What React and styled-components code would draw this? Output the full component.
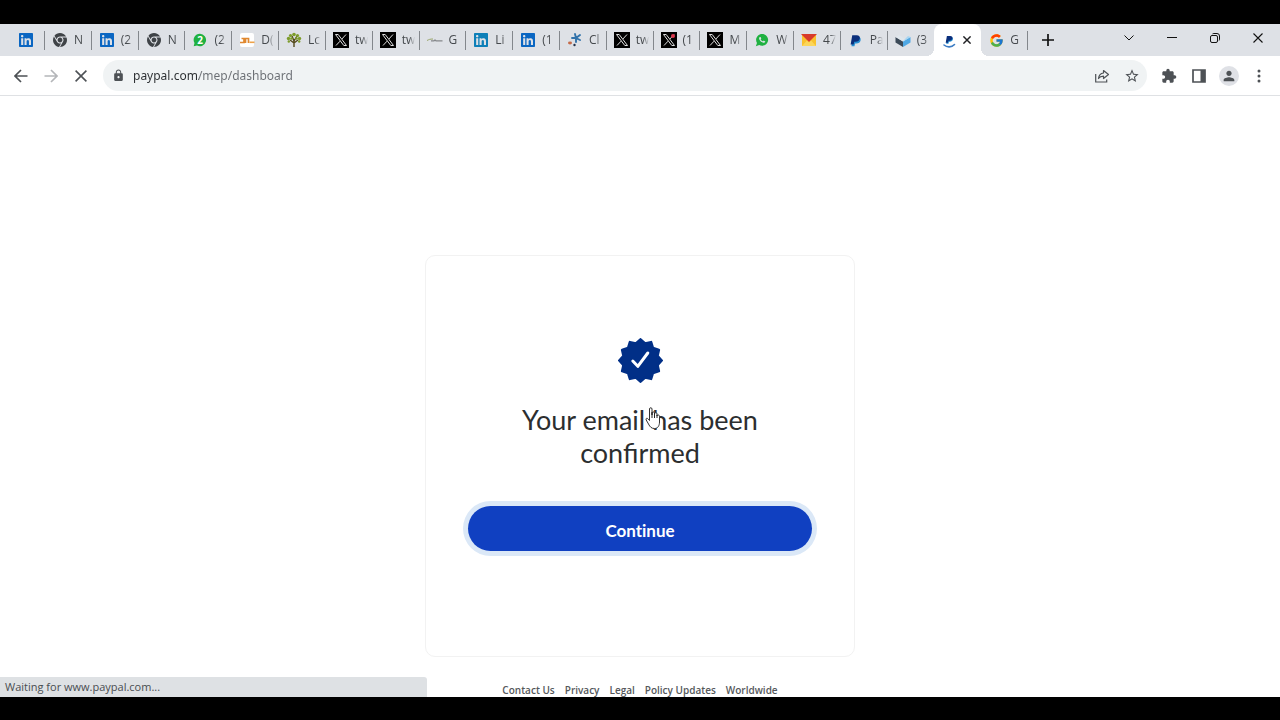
import React, { useState } from 'react'
import styled, { createGlobalStyle, css } from 'styled-components'
import { FaChrome, FaLinkedin } from 'react-icons/fa6'
import { FcGoogle } from 'react-icons/fc'
import { IoLogoWhatsapp } from 'react-icons/io'
import { MdExtension, MdLock, MdPerson, MdStarBorder } from 'react-icons/md'

const UI_FONT = '"Open Sans", "Noto Sans", sans-serif'

const GlobalStyle = createGlobalStyle`
  * {
    box-sizing: border-box;
  }

  body {
    margin: 0;
    background: #000;
    font-family: ${UI_FONT};
  }

  button {
    padding: 0;
    border: 0;
    background: none;
    font-family: inherit;
    color: inherit;
  }
`

const Screen = styled.div`
  display: flex;
  flex-direction: column;
  min-height: 100vh;
  padding: 24px 0 23px;
  background: #000;
`

/* tab strip */

const TabStrip = styled.div`
  display: flex;
  height: 32px;
  background: #dee1e6;
`

const Tabs = styled.div`
  display: flex;
  flex: 1;
  min-width: 0;
`

const Tab = styled.div`
  position: relative;
  display: flex;
  align-items: center;
  flex: 1;
  min-width: 0;

  &::after {
    content: '';
    position: absolute;
    top: 7px;
    right: 0;
    width: ${p => (p.$plain ? 0 : '1px')};
    height: 19px;
    background: #83878c;
  }

  ${p => p.$pinned && css`
    flex: 0 0 45px;
    padding-left: 11px;
  `}

  ${p => p.$active && css`
    border-radius: 8px 8px 0 0;
    background: #fff;

    &::before,
    &::after {
      content: '';
      position: absolute;
      top: auto;
      bottom: 0;
      width: 8px;
      height: 8px;
    }

    &::before {
      left: -8px;
      background: radial-gradient(circle at 0 0, transparent 8px, #fff 8px);
    }

    &::after {
      right: -8px;
      background: radial-gradient(circle at 100% 0, transparent 8px, #fff 8px);
    }
  `}
`

const TabButton = styled.button`
  display: flex;
  align-items: center;
  gap: 6px;
  min-width: 0;
  height: 16px;
  padding-left: 7px;
  font-size: 12px;
  line-height: 16px;
  color: #45494d;
`

const Favicon = styled.span`
  display: flex;
  align-items: center;
  justify-content: center;
  flex: none;
  width: 16px;
  height: 16px;
`

const TabLabel = styled.span`
  white-space: nowrap;
  mask-image: linear-gradient(to right, #000 7px, transparent 13px);
`

const TabClose = styled.button`
  display: flex;
  align-items: center;
  justify-content: center;
  width: 16px;
  height: 16px;
  margin-left: 2px;
  color: #202124;
`

const StripControls = styled.div`
  display: flex;
  justify-content: space-between;
  width: 252px;
  padding-right: 1px;
  color: #111;
`

const WindowButtons = styled.div`
  display: flex;
  height: 27px;
`

const WindowButton = styled.button`
  display: flex;
  align-items: center;
  justify-content: center;
  width: 43px;
`

const NewTab = styled.button`
  display: flex;
  align-items: center;
  justify-content: center;
  width: 40px;
`

/* toolbar */

const Toolbar = styled.div`
  display: flex;
  align-items: center;
  height: 40px;
  padding: 0 6px;
  border-bottom: 1px solid #dfe1e4;
  background: #fff;
`

const ToolButton = styled.button`
  display: flex;
  align-items: center;
  justify-content: center;
  flex: none;
  width: 30px;
  height: 30px;
  color: ${p => (p.disabled ? '#b4b6b9' : '#4d5155')};
`

const AddressBar = styled.div`
  display: flex;
  align-items: center;
  flex: 1;
  min-width: 0;
  height: 31px;
  margin: 0 7px;
  padding-left: 9px;
  border-radius: 16px;
  background: #f0f3f4;
`

const LockIcon = styled(MdLock)`
  flex: none;
  margin-right: 8px;
  color: #4d5155;
`

/* the host part of the address is darker than its path */
const AddressInput = styled.input`
  flex: 1;
  min-width: 0;
  padding: 0;
  border: 0;
  outline: 0;
  background: linear-gradient(to right, #2b2e31 66px, #6a6e73 66px);
  background-clip: text;
  color: transparent;
  caret-color: #202124;
  font-family: "Noto Sans", sans-serif;
  font-size: 12px;
  line-height: 20px;
`

const Avatar = styled.span`
  display: flex;
  align-items: center;
  justify-content: center;
  width: 20px;
  height: 20px;
  border-radius: 50%;
  background: #dfe1e6;
`

/* page */

const Page = styled.main`
  position: relative;
  display: flex;
  flex-direction: column;
  align-items: center;
  flex: 1;
  padding: 159px 16px 0;
  overflow: hidden;
  background: #fff;
`

const Card = styled.section`
  display: flex;
  flex-direction: column;
  align-items: center;
  width: 100%;
  max-width: 430px;
  padding: 82px 42px 105px;
  border: 1px solid #f2f2f2;
  border-radius: 10px;
`

const Title = styled.h1`
  position: relative;
  max-width: 270px;
  margin: 20px 0 37px;
  font-family: Lato, sans-serif;
  font-size: 27px;
  font-weight: 400;
  line-height: 33px;
  text-align: center;
  color: #2c2e2f;
`

const Continue = styled.button`
  width: 100%;
  height: 45px;
  padding-top: 4px;
  border-radius: 23px;
  background: #1040c1;
  box-shadow: 0 0 0 5px #dbe8f7;
  font-family: Lato, sans-serif;
  font-size: 17px;
  font-weight: 700;
  font-variant-ligatures: none;
  color: #fff;
`

const Footer = styled.footer`
  display: flex;
  gap: 10px;
  margin-top: 26px;
`

const FooterLink = styled.a`
  font-size: 10px;
  font-weight: 600;
  line-height: 14px;
  white-space: nowrap;
  text-decoration: none;
  color: #55585b;
`

const Status = styled.div`
  position: absolute;
  bottom: 0;
  left: 0;
  width: calc(100% / 3);
  height: 20px;
  padding-left: 5px;
  border-radius: 0 3px 0 0;
  background: #dee1e4;
  font-size: 11px;
  line-height: 20px;
  color: #494d51;
`

const Pointer = styled.svg`
  position: absolute;
  top: 4px;
  left: 52%;
`

/* icons */

const LinkedIn = ({ color = '#0a66c2' }) => <FaLinkedin size={16} color={color} />

const Chrome = () => <FaChrome size={14} color="#3f4347" />

const X = ({ alert }) => (
  <svg width="16" height="16" viewBox="0 0 16 16" fill="none" stroke="#ddd">
    <path d="M0 0h16v16H0z" fill="#000" stroke="none" />
    <path d="M2.500 2.500h2.700l8.300 11h-2.700z" />
    <path d="M13 2.500L8.900 7M7 9.200l-4 4.300" />
    {alert && <circle cx="12" cy="4" r="2" fill="#e0384e" stroke="none" />}
  </svg>
)

const CountText = styled.text`
  font-family: ${UI_FONT};
  font-size: 10px;
  font-weight: 700;
  text-anchor: middle;
`

const WhatsAppCount = () => (
  <svg width="16" height="16" viewBox="0 0 16 16">
    <path d="M8 1.800a6.200 6.200 0 1 1-3 11.700L1.700 14.300l.8-3.200A6.200 6.200 0 0 1 8 1.800z" fill="#1fb141" />
    <CountText x="8" y="12" fill="#fff">2</CountText>
  </svg>
)

const Delivery = () => (
  <svg width="16" height="16" viewBox="0 0 16 16">
    <rect x="1" y="1" width="14" height="14" rx="2" fill="#fff" />
    <path d="M1 10.500h4V6.500H2.500M6.500 11V6.500h3V11" stroke="#e0882f" strokeWidth="1.700" fill="none" />
    <path d="M10.500 10.300h5" stroke="#eda24a" strokeWidth="1.600" fill="none" />
  </svg>
)

const Tree = () => (
  <svg width="16" height="16" viewBox="0 0 16 16">
    <path d="M8 15V7M8 11L4 8M8 11l4-3M8 9L6 4M8 9l3-5" stroke="#554a1c" strokeWidth="1.400" fill="none" />
    <g fill="#7d9c2b">
      <circle cx="8" cy="2.500" r="1.800" />
      <circle cx="4.500" cy="3.500" r="1.600" />
      <circle cx="11.500" cy="3.500" r="1.600" />
      <circle cx="2.500" cy="6.500" r="1.700" />
      <circle cx="13.500" cy="6.500" r="1.700" />
      <circle cx="5.500" cy="6.500" r="1.300" />
      <circle cx="10.500" cy="6.500" r="1.300" />
      <circle cx="2.800" cy="9.500" r="1.200" />
      <circle cx="13.200" cy="9.500" r="1.200" />
    </g>
  </svg>
)

const Signature = () => (
  <svg width="16" height="16" viewBox="0 0 16 16" fill="none">
    <path d="M0 8.500c2-1 3-1.500 6-1.500" stroke="#9aa66a" />
    <path d="M4 8.800h3l1-.8 1 .8h6.500" stroke="#85888b" strokeWidth="1.300" />
  </svg>
)

const Splash = () => (
  <svg width="16" height="16" viewBox="0 0 16 16">
    <path d="M9 6L8 2M9 6l4-3M9 6l4 2M9 6l-4 0M9 6l0 4" stroke="#3273ab" strokeWidth="1.900" strokeLinecap="round" />
    <ellipse cx="3" cy="11" rx="2" ry="1.400" fill="#c56a48" />
    <circle cx="7.500" cy="13" r="1.200" fill="#26324a" />
  </svg>
)

const Mail = () => (
  <svg width="16" height="16" viewBox="0 0 16 16">
    <path d="M1 3h14v11H1z" fill="#f9c22e" />
    <path d="M0 2h16L8 10z" fill="#d83a2c" />
    <path d="M1 14l5-5.500 2 2 2-2 5 5.500z" fill="#fbd65b" />
  </svg>
)

const PAYPAL_P = 'M4 1.500h5.500c3 0 4.300 1.600 3.800 4.100-.6 2.900-2.500 4-5.200 4H6.500L5.700 13H2z'

const PayPal = () => (
  <svg width="13" height="13" viewBox="0 0 16 16">
    <path d={PAYPAL_P} fill="#2790d2" transform="translate(1 2)" />
    <path d={PAYPAL_P} fill="#0a2f7c" />
  </svg>
)

const PayPalLoading = () => (
  <svg width="16" height="16" viewBox="0 0 16 16">
    <path d={PAYPAL_P} fill="#2790d2" transform="translate(4 4) scale(.6)" />
    <path d={PAYPAL_P} fill="#0a2f7c" transform="translate(3.500 3) scale(.6)" />
    <path d="M3 13c3 2.600 7.500 2.600 10.500-.5" stroke="#3d7dc4" strokeWidth="1.600" fill="none" strokeLinecap="round" />
  </svg>
)

const Cube = () => (
  <svg width="16" height="16" viewBox="0 0 16 16">
    <path d="M.5 5L8 9.500V15L.5 10.500z" fill="#3c4a58" />
    <path d="M8 9.500L15.500 5v5.500L8 15z" fill="#50a8e4" />
    <path d="M.5 5L4 3l6 4-2 2.500z" fill="#dfe6ec" />
    <path d="M8 9.500l2-2.500 3-3 2.500 1z" fill="#a9d6f2" />
  </svg>
)

const Cross = ({ size = 10, weight = 1.3 }) => (
  <svg width={size} height={size} viewBox="0 0 10 10" stroke="currentColor" strokeWidth={weight}>
    <path d="M.5.5l9 9M9.500.5l-9 9" />
  </svg>
)

const Arrow = ({ flip }) => (
  <svg width="14" height="14" viewBox="0 0 14 14" fill="none" stroke="currentColor" strokeWidth="1.700">
    <path d={flip ? 'M.5 7h12M7 1l6 6-6 6' : 'M13.500 7h-12M7 1L1 7l6 6'} />
  </svg>
)

const Share = () => (
  <svg width="16" height="16" viewBox="0 0 16 16" fill="none" stroke="currentColor" strokeWidth="1.200">
    <path d="M1.700 6v8h11v-2.500" />
    <path d="M9.500 2.500l5 4-5 4V8.200c-2.300 0-3.900.7-5 2.300.4-3 2-5.100 5-5.500z" strokeLinejoin="round" />
  </svg>
)

const SidePanel = () => (
  <svg width="14" height="14" viewBox="0 0 14 14">
    <path d="M1 1h12v12H1z" fill="none" stroke="currentColor" strokeWidth="1.700" />
    <path d="M8.500 1H13v12H8.500z" fill="currentColor" />
  </svg>
)

const Dots = () => (
  <svg width="4" height="14" viewBox="0 0 4 14" fill="currentColor">
    <circle cx="2" cy="2" r="1.500" />
    <circle cx="2" cy="7" r="1.500" />
    <circle cx="2" cy="12" r="1.500" />
  </svg>
)

// twelve rounded points around the seal
const sealPoints = Array.from({ length: 24 }, (_, i) => {
  const r = i % 2 ? 17.6 : 21.2
  const a = (i * Math.PI) / 12
  return `${(22.5 + r * Math.sin(a)).toFixed(2)},${(22.5 - r * Math.cos(a)).toFixed(2)}`
}).join(' ')

const Seal = () => (
  <svg width="45" height="45" viewBox="0 0 45 45">
    <polygon points={sealPoints} fill="#012f87" stroke="#012f87" strokeWidth="2.500" strokeLinejoin="round" />
    <path d="M14.800 23l5 5.300 10-13.300" fill="none" stroke="#fff" strokeWidth="3" strokeLinecap="round" strokeLinejoin="round" />
  </svg>
)

const Hand = () => (
  <Pointer width="17" height="23" viewBox="0 0 17 23" aria-hidden="true">
    <path
      d="M4.500 13.500V2c0-1.700 2.500-1.700 2.500 0v6-2c0-1.500 2.500-1.500 2.500 0v2-1.200c0-1.500 2.500-1.500 2.500 0V9c0-1.500 2.500-1.300 2.500.2V15c0 3.500-1.500 6.500-5 6.500-3 0-4.500-1.500-6-4.500L1.200 13c-.8-1.700 1-2.400 2-.9z"
      fill="#fff"
      stroke="#333"
      strokeWidth="1"
      strokeLinejoin="round"
    />
    <path d="M7 5v6M9.500 6v5M12 8v3" stroke="#222" strokeWidth="1" />
  </Pointer>
)

const TABS = [
  { icon: <LinkedIn />, pinned: true },
  { icon: <Chrome />, label: 'N' },
  { icon: <LinkedIn />, label: '(2' },
  { icon: <Chrome />, label: 'N' },
  { icon: <WhatsAppCount />, label: '(2' },
  { icon: <Delivery />, label: 'D(' },
  { icon: <Tree />, label: 'Lc' },
  { icon: <X />, label: 'tw' },
  { icon: <X />, label: 'tw' },
  { icon: <Signature />, label: 'G' },
  { icon: <LinkedIn color="#0d7fb8" />, label: 'Li' },
  { icon: <LinkedIn />, label: '(1' },
  { icon: <Splash />, label: 'Cl' },
  { icon: <X />, label: 'tw' },
  { icon: <X alert />, label: '(1' },
  { icon: <X />, label: 'M' },
  { icon: <IoLogoWhatsapp size={14} color="#1fb141" />, label: 'W' },
  { icon: <Mail />, label: '47' },
  { icon: <PayPal />, label: 'Pa' },
  { icon: <Cube />, label: '(3', plain: true },
  { icon: <PayPalLoading />, active: true },
  { icon: <FcGoogle size={15} />, label: 'G' },
]

const LINKS = ['Contact Us', 'Privacy', 'Legal', 'Policy Updates', 'Worldwide']

const BrowserTab = ({ icon, label, pinned, plain, active }) => (
  <Tab $pinned={pinned} $plain={plain} $active={active}>
    <TabButton type="button" aria-label={label ? undefined : 'Tab'}>
      <Favicon>{icon}</Favicon>
      {label && <TabLabel>{label}</TabLabel>}
    </TabButton>
    {active && (
      <TabClose type="button" aria-label="Close tab">
        <Cross size={8} weight={1.8} />
      </TabClose>
    )}
  </Tab>
)

export default () => {
  const [url, setUrl] = useState('paypal.com/mep/dashboard')

  return (
    <Screen>
      <GlobalStyle />
      <TabStrip>
        <Tabs>
          {TABS.map((tab, i) => <BrowserTab key={i} {...tab} />)}
        </Tabs>
        <StripControls>
          <NewTab type="button" aria-label="New tab">
            <svg width="12" height="12" viewBox="0 0 12 12" stroke="currentColor" strokeWidth="1.700">
              <path d="M6 0v12M0 6h12" />
            </svg>
          </NewTab>
          <WindowButtons>
            <WindowButton type="button" aria-label="Search tabs">
              <svg width="10" height="6" viewBox="0 0 10 6" fill="none" stroke="currentColor">
                <path d="M.5.5L5 5 9.500.5" />
              </svg>
            </WindowButton>
            <WindowButton type="button" aria-label="Minimize">
              <svg width="10" height="2" viewBox="0 0 10 2">
                <path d="M0 0h10v1H0z" fill="currentColor" />
              </svg>
            </WindowButton>
            <WindowButton type="button" aria-label="Restore">
              <svg width="10" height="10" viewBox="0 0 10 10" fill="none" stroke="currentColor">
                <rect x=".5" y="2.500" width="7" height="7" rx="1.500" />
                <path d="M2.500.9C3 .6 3.300.5 4 .5h3A2.500 2.500 0 0 1 9.500 3v3c0 .7-.1 1-.4 1.500" />
              </svg>
            </WindowButton>
            <WindowButton type="button" aria-label="Close">
              <Cross weight={1.1} />
            </WindowButton>
          </WindowButtons>
        </StripControls>
      </TabStrip>
      <Toolbar>
        <ToolButton type="button" aria-label="Back"><Arrow /></ToolButton>
        <ToolButton type="button" aria-label="Forward" disabled><Arrow flip /></ToolButton>
        <ToolButton type="button" aria-label="Stop"><Cross size={12} /></ToolButton>
        <AddressBar>
          <LockIcon size={13} />
          <AddressInput
            aria-label="Address"
            spellCheck={false}
            value={url}
            onChange={e => setUrl(e.target.value)}
          />
          <ToolButton type="button" aria-label="Share"><Share /></ToolButton>
          <ToolButton type="button" aria-label="Bookmark"><MdStarBorder size={16} /></ToolButton>
        </AddressBar>
        <ToolButton type="button" aria-label="Extensions"><MdExtension size={16} /></ToolButton>
        <ToolButton type="button" aria-label="Side panel"><SidePanel /></ToolButton>
        <ToolButton type="button" aria-label="Profile">
          <Avatar><MdPerson size={16} /></Avatar>
        </ToolButton>
        <ToolButton type="button" aria-label="Menu"><Dots /></ToolButton>
      </Toolbar>
      <Page>
        <Card>
          <Seal />
          <Title>
            Your email has been confirmed
            <Hand />
          </Title>
          <Continue type="button">Continue</Continue>
        </Card>
        <Footer>
          {LINKS.map(link => <FooterLink key={link} href="#">{link}</FooterLink>)}
        </Footer>
        <Status>Waiting for www.paypal.com...</Status>
      </Page>
    </Screen>
  )
}
